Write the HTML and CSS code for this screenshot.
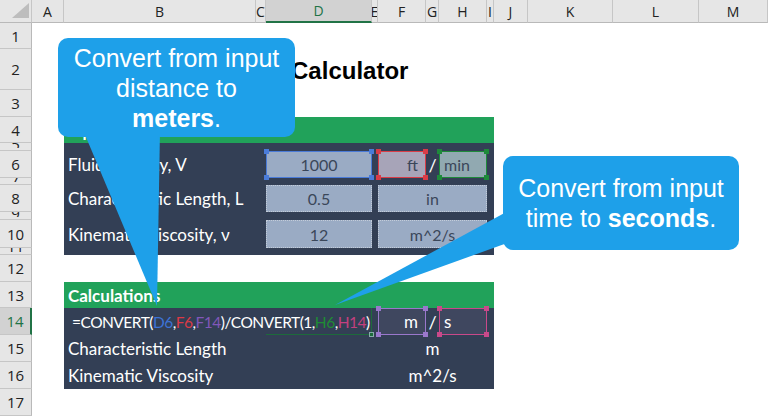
FILE: index.html
```html
<!DOCTYPE html>
<html lang="en">
<head>
    <meta charset="UTF-8">
    <title>Reynolds Number Calculator</title>
    <link rel="stylesheet" href="styles.css">
</head>
<body>

    <div class="sheet">
        <!-- column letters -->
        <div class="row hdr">
            <div class="corner"><span class="tri"></span></div>
            <div class="col">A</div>
            <div class="col">B</div>
            <div class="col">C</div>
            <div class="col active">D</div>
            <div class="col">E</div>
            <div class="col">F</div>
            <div class="col">G</div>
            <div class="col">H</div>
            <div class="col">I</div>
            <div class="col">J</div>
            <div class="col">K</div>
            <div class="col">L</div>
            <div class="col">M</div>
        </div>

        <div class="row h26"><div class="num">1</div></div>
        <div class="row h41">
            <div class="num">2</div>
            <div class="blank"></div>
            <div class="title">Reynolds Number Calculator</div>
        </div>
        <div class="row h27"><div class="num">3</div></div>
        <div class="row h26">
            <div class="num">4</div>
            <div class="blank"></div>
            <div class="band green"><div class="cell label bold">Inputs</div></div>
        </div>
        <div class="row h8">
            <div class="num"><span class="cut">5</span></div>
            <div class="blank"></div>
            <div class="band"></div>
        </div>
        <div class="row h27">
            <div class="num">6</div>
            <div class="blank"></div>
            <div class="band">
                <div class="cell label">Fluid Velocity, V</div>
                <div class="cell"></div>
                <div class="cell"><div class="box ref-blue">1000<i class="h tl"></i><i class="h tr"></i><i class="h bl"></i><i class="h br"></i></div></div>
                <div class="cell"></div>
                <div class="cell"><div class="box ref-red right">ft<i class="h tl"></i><i class="h tr"></i><i class="h bl"></i><i class="h br"></i></div></div>
                <div class="cell slash">/</div>
                <div class="cell"><div class="box ref-green left">min<i class="h tl"></i><i class="h tr"></i><i class="h bl"></i><i class="h br"></i></div></div>
            </div>
        </div>
        <div class="row h7">
            <div class="num"><span class="cut">7</span></div>
            <div class="blank"></div>
            <div class="band"></div>
        </div>
        <div class="row h27">
            <div class="num">8</div>
            <div class="blank"></div>
            <div class="band">
                <div class="cell label">Characteristic Length, L</div>
                <div class="cell"></div>
                <div class="cell"><div class="box">0.5</div></div>
                <div class="cell"></div>
                <div class="cell span3"><div class="box">in</div></div>
            </div>
        </div>
        <div class="row h8">
            <div class="num"><span class="cut">9</span></div>
            <div class="blank"></div>
            <div class="band"></div>
        </div>
        <div class="row h28">
            <div class="num">10</div>
            <div class="blank"></div>
            <div class="band">
                <div class="cell label">Kinematic Viscosity, ν</div>
                <div class="cell"></div>
                <div class="cell"><div class="box">12</div></div>
                <div class="cell"></div>
                <div class="cell span3"><div class="box">m^2/s</div></div>
            </div>
        </div>
        <div class="row h7">
            <div class="num"><span class="cut">11</span></div>
            <div class="blank"></div>
            <div class="band"></div>
        </div>
        <div class="row h27"><div class="num">12</div></div>
        <div class="row h26">
            <div class="num">13</div>
            <div class="blank"></div>
            <div class="band green"><div class="cell label bold">Calculations</div></div>
        </div>
        <div class="row h27">
            <div class="num active">14</div>
            <div class="blank"></div>
            <div class="band">
                <div class="cell label formula">=CONVERT(<b class="c-blue">D6</b>,<b class="c-red">F6</b>,<b class="c-purple">F14</b>)/CONVERT(1,<b class="c-green">H6</b>,<b class="c-pink">H14</b>)<span class="caret"></span></div>
                <div class="cell"></div>
                <div class="cell editing"><i class="fill"></i></div>
                <div class="cell"></div>
                <div class="cell"><div class="box dark ref-purple right">m<i class="h tl"></i><i class="h tr"></i><i class="h bl"></i><i class="h br"></i></div></div>
                <div class="cell slash">/</div>
                <div class="cell"><div class="box dark ref-pink left">s<i class="h tl"></i><i class="h tr"></i><i class="h bl"></i><i class="h br"></i></div></div>
            </div>
        </div>
        <div class="row h27">
            <div class="num">15</div>
            <div class="blank"></div>
            <div class="band">
                <div class="cell label">Characteristic Length</div>
                <div class="cell"></div>
                <div class="cell"></div>
                <div class="cell"></div>
                <div class="cell span3 unit">m</div>
            </div>
        </div>
        <div class="row h27">
            <div class="num">16</div>
            <div class="blank"></div>
            <div class="band">
                <div class="cell label">Kinematic Viscosity</div>
                <div class="cell"></div>
                <div class="cell"></div>
                <div class="cell"></div>
                <div class="cell span3 unit">m^2/s</div>
            </div>
        </div>
        <div class="row h27"><div class="num">17</div></div>

        <!-- speech bubbles over the sheet -->
        <svg class="tails" width="768" height="416" viewBox="0 0 768 416">
            <polygon points="83,130 160,130 157,306" />
            <polygon points="510,210 510,242 335,305" />
        </svg>
        <div class="callout one">
            <p>Convert from input<br>distance to<br><b>meters</b>.</p>
        </div>
        <div class="callout two">
            <p>Convert from input<br>time to <b>seconds</b>.</p>
        </div>
    </div>

</body>
</html>
```

FILE: styles.css
```css
body {
    margin: 0;
    padding: 0;
    background-color: white;
    font-family: "Lato", "Open Sans", sans-serif;
    overflow: hidden;
}

.sheet {
    position: relative;
    width: 768px;
    height: 416px;
    overflow: hidden;
}

.row {
    display: grid;
    grid-template-columns: 32px 32px 192px 10px 106px 6px 48px 13px 48px 7px 34px 85px 86px 1fr;
}

.hdr { height: 23px; }
.h7 { height: 7px; }
.h8 { height: 8px; }
.h26 { height: 26px; }
.h27 { height: 27px; }
.h28 { height: 28px; }
.h41 { height: 41px; }

/* column and row headers */
.corner {
    position: relative;
    background-color: #e6e6e6;
    border-right: 1px solid #c6c6c6;
    border-bottom: 1px solid #b9b9b9;
}

.corner .tri {
    position: absolute;
    right: 2px;
    bottom: 4px;
    width: 0;
    height: 0;
    border-left: 17px solid transparent;
    border-bottom: 15px solid #bdbdbd;
}

.col {
    background-color: #e6e6e6;
    border-right: 1px solid #c6c6c6;
    border-bottom: 1px solid #b9b9b9;
    font-family: "Open Sans", sans-serif;
    font-size: 14px;
    color: #222;
    display: flex;
    align-items: center;
    justify-content: center;
    overflow: hidden;
}

.col.active {
    background-color: #d2d2d2;
    color: #217346;
    border-bottom: 2px solid #217346;
}

.num {
    grid-column: 1;
    background-color: #e6e6e6;
    border-right: 1px solid #b9b9b9;
    border-bottom: 1px solid #c6c6c6;
    box-sizing: border-box;
    font-family: "Open Sans", sans-serif;
    font-size: 15px;
    color: #222;
    display: flex;
    align-items: center;
    justify-content: center;
    overflow: hidden;
}

.num .cut {
    line-height: 8px;
    height: 8px;
    overflow: hidden;
    display: block;
    margin-top: -6px;
}

.num.active {
    background-color: #d2d2d2;
    color: #217346;
    border-right: 2px solid #217346;
}

.blank {
    grid-column: 2;
}

.title {
    grid-column: 3 / 11;
    display: flex;
    align-items: center;
    padding-left: 15px;
    padding-top: 3px;
    font-family: "Liberation Sans", Arial, sans-serif;
    font-weight: bold;
    font-size: 24px;
    color: black;
    white-space: nowrap;
}

/* dark table band spanning B..I */
.band {
    grid-column: 3 / 11;
    display: grid;
    grid-template-columns: 192px 10px 106px 6px 48px 13px 48px 7px;
    background-color: #333f55;
}

.band.green {
    background-color: #21a25a;
}

.cell {
    position: relative;
    display: flex;
    align-items: center;
    color: white;
    font-size: 17px;
    white-space: nowrap;
}

.span3 {
    grid-column: 5 / 8;
}

.label {
    padding-left: 4px;
}

.bold {
    font-weight: bold;
}

.slash {
    justify-content: center;
    font-size: 18px;
}

.unit {
    justify-content: center;
}

.box {
    position: relative;
    box-sizing: border-box;
    width: 100%;
    height: 100%;
    border: 1px dotted #c3ccd9;
    background-color: #9aabc4;
    color: #3b475a;
    display: flex;
    align-items: center;
    justify-content: center;
    font-size: 16px;
}

.box.right { justify-content: flex-end; padding-right: 7px; }
.box.left { justify-content: flex-start; padding-left: 4px; }

.box.dark {
    background-color: #3f475f;
    color: white;
    font-size: 17px;
}

.ref-blue { border: 1.5px solid #4a7bd8; }
.ref-red { border: 1.5px solid #d93c47; background-color: #a7a4b8; }
.ref-green { border: 1.5px solid #1e8a3a; background-color: #91a9b1; }
.ref-purple { border: 1.5px solid #9a78cc; }
.ref-pink { border: 1.5px solid #c9498a; }

/* selection handles on referenced ranges */
.h {
    position: absolute;
    width: 5px;
    height: 5px;
    background-color: inherit;
}
.h.tl { left: -3px; top: -3px; }
.h.tr { right: -3px; top: -3px; }
.h.bl { left: -3px; bottom: -3px; }
.h.br { right: -3px; bottom: -3px; }

.ref-blue .h { background-color: #4a7bd8; }
.ref-red .h { background-color: #d93c47; }
.ref-green .h { background-color: #1e8a3a; }
.ref-purple .h { background-color: #9a78cc; }
.ref-pink .h { background-color: #c9498a; }

/* formula being edited in D14 */
.formula {
    padding-left: 8px;
    font-size: 15.5px;
    letter-spacing: -0.5px;
    z-index: 2;
}

.formula b { font-weight: normal; }
.c-blue { color: #3d73d6; }
.c-red { color: #dc3a46; }
.c-purple { color: #8157b9; }
.c-green { color: #1f8c34; }
.c-pink { color: #c4407f; }

.caret {
    display: inline-block;
    width: 1px;
    height: 19px;
    margin-left: 3px;
    background-color: #dde3ea;
}

.editing {
    border-bottom: 1.5px solid #1d6b3b;
    border-right: 1.5px solid #1d6b3b;
    box-sizing: border-box;
}

.editing .fill {
    position: absolute;
    right: -3px;
    bottom: -3px;
    width: 3px;
    height: 3px;
    background-color: #1d6b3b;
    border: 1px solid #8aa;
}

/* speech bubbles */
.tails {
    position: absolute;
    left: 0;
    top: 0;
    z-index: 5;
}

.tails polygon {
    fill: #1ea0e9;
}

.callout {
    position: absolute;
    z-index: 6;
    background-color: #1ea0e9;
    border-radius: 10px;
    display: flex;
    align-items: center;
    justify-content: center;
    color: white;
    font-family: "Liberation Sans", Arial, sans-serif;
    font-size: 25px;
    text-align: center;
}

.callout p {
    margin: 0;
    line-height: 30px;
}

.callout.one {
    left: 58px;
    top: 38px;
    width: 237px;
    height: 99px;
}

.callout.two {
    left: 503px;
    top: 156px;
    width: 236px;
    height: 94px;
}
```
